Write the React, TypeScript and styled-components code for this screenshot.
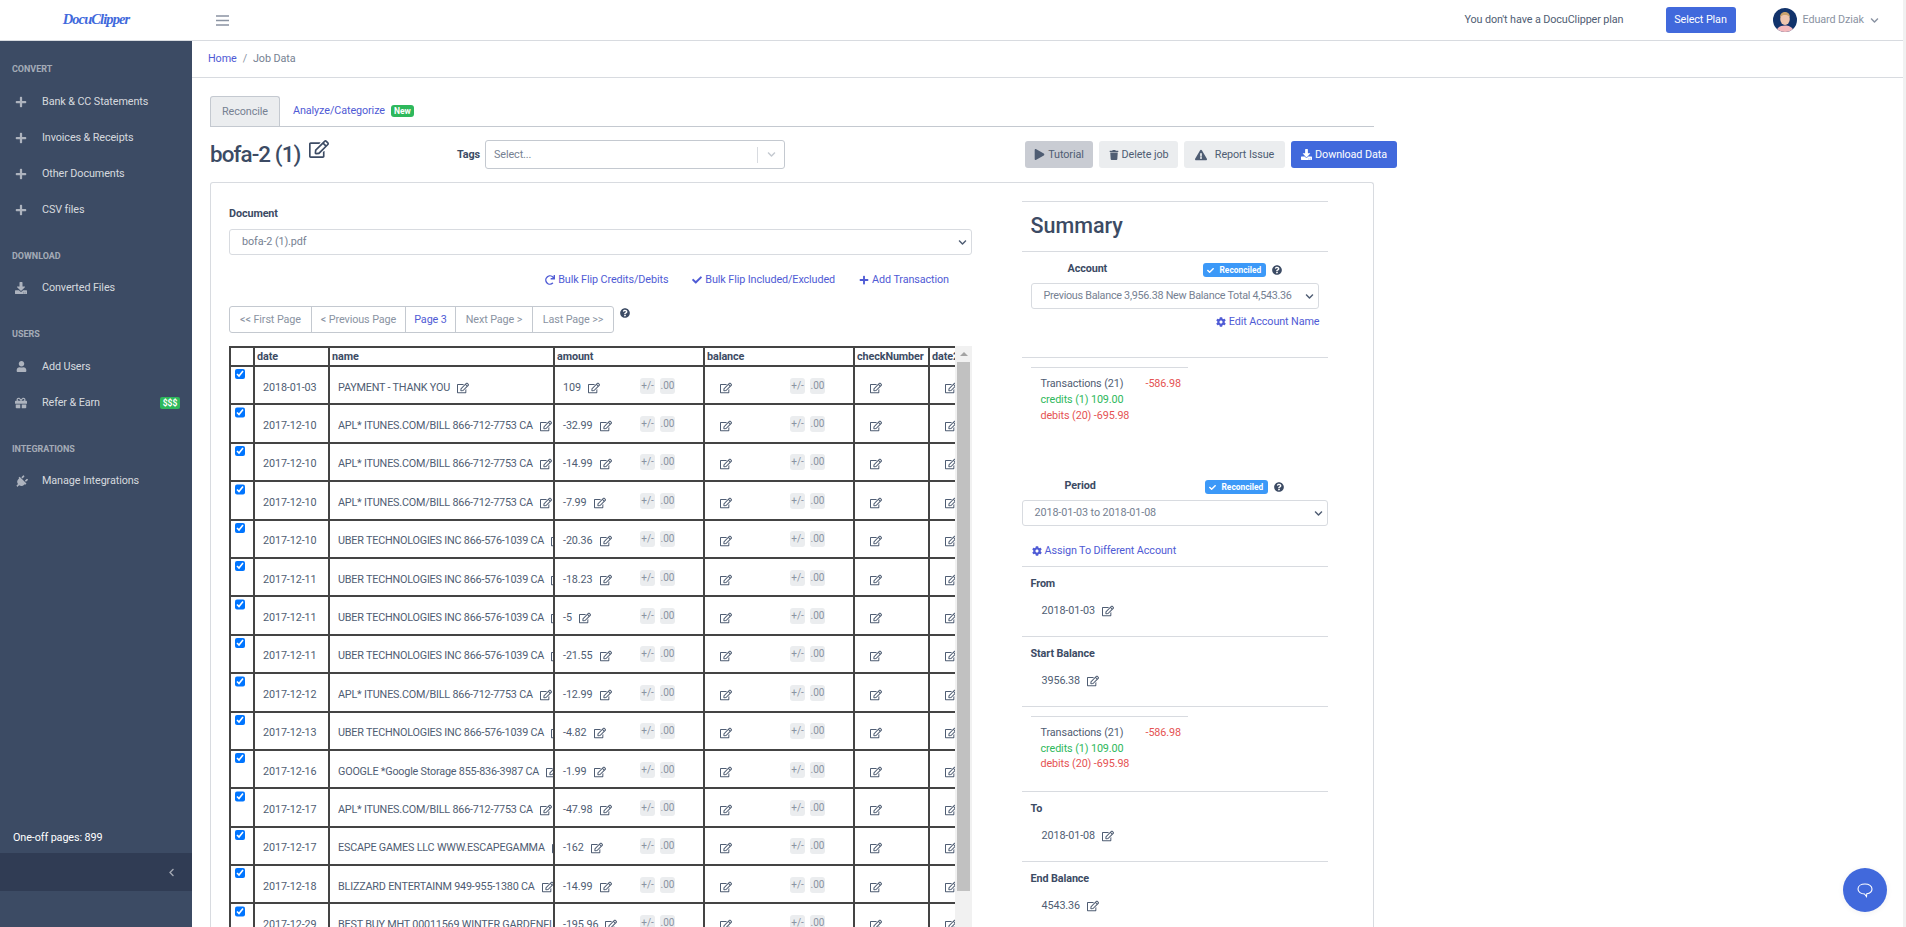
import React from "react";
import styled, { createGlobalStyle } from "styled-components";
import {
  FaPlus,
  FaDownload,
  FaUser,
  FaGift,
  FaPlug,
  FaChevronLeft,
  FaChevronDown,
  FaRegEdit,
  FaPlay,
  FaTrash,
  FaExclamationTriangle,
  FaRedo,
  FaCheck,
  FaCog,
  FaQuestionCircle,
} from "react-icons/fa";

const GlobalStyle = createGlobalStyle`
  html, body {
    margin: 0;
    height: 927px;
    overflow: hidden;
    background: #fff;
  }
  body {
    font-family: "Roboto", "Noto Sans", sans-serif;
    font-size: 10.8px;
    line-height: 16px;
    letter-spacing: -0.1px;
    color: #4f5d73;
  }
  * { box-sizing: border-box; }
`;

type Txn = { date: string; name: string; amount: string };

const APL = "APL* ITUNES.COM/BILL 866-712-7753 CA";
const UBER = "UBER TECHNOLOGIES INC 866-576-1039 CA";

const txns: Txn[] = [
  { date: "2018-01-03", name: "PAYMENT - THANK YOU", amount: "109" },
  { date: "2017-12-10", name: APL, amount: "-32.99" },
  { date: "2017-12-10", name: APL, amount: "-14.99" },
  { date: "2017-12-10", name: APL, amount: "-7.99" },
  { date: "2017-12-10", name: UBER, amount: "-20.36" },
  { date: "2017-12-11", name: UBER, amount: "-18.23" },
  { date: "2017-12-11", name: UBER, amount: "-5" },
  { date: "2017-12-11", name: UBER, amount: "-21.55" },
  { date: "2017-12-12", name: APL, amount: "-12.99" },
  { date: "2017-12-13", name: UBER, amount: "-4.82" },
  { date: "2017-12-16", name: "GOOGLE *Google Storage 855-836-3987 CA", amount: "-1.99" },
  { date: "2017-12-17", name: APL, amount: "-47.98" },
  { date: "2017-12-17", name: "ESCAPE GAMES LLC WWW.ESCAPEGAMMA", amount: "-162" },
  { date: "2017-12-18", name: "BLIZZARD ENTERTAINM 949-955-1380 CA", amount: "-14.99" },
  { date: "2017-12-29", name: "BEST BUY MHT 00011569 WINTER GARDENFL", amount: "-195.96" },
];

function Hamburger() {
  return (
    <svg width="13" height="11" viewBox="0 0 13 11">
      <path d="M0 1h13M0 5.500h13M0 10h13" stroke="#8a93a2" strokeWidth="1.300" fill="none" />
    </svg>
  );
}

function Avatar() {
  return (
    <svg width="24" height="24" viewBox="0 0 24 24">
      <defs>
        <clipPath id="avatarClip">
          <circle cx="12" cy="12" r="12" />
        </clipPath>
      </defs>
      <g clipPath="url(#avatarClip)">
        <rect width="24" height="24" fill="#12336b" />
        <path d="M3 24c1-5 5-6.500 9-6.500s8 1.500 9 6.500z" fill="#f3b9bd" />
        <ellipse cx="12" cy="11" rx="4.800" ry="6" fill="#eec5ae" />
        <path d="M7 9.500c0-4 2.500-5.500 5-5.500s5 1.500 5 5.500c-1.500-2-3-2.500-5-2.500s-3.500.5-5 2.500z" fill="#c9a26c" />
      </g>
    </svg>
  );
}

function ChatBubble() {
  return (
    <svg width="16" height="15" viewBox="0 0 16 15" fill="none">
      <path
        d="M8 1C4 1 1 3 1 6s3 5 6.500 5l2 2.500.3-2.700C13 10.300 15 8.500 15 6c0-3-3-5-7-5z"
        stroke="#fff"
        strokeWidth="1.100"
      />
    </svg>
  );
}

export default function App() {
  return (
    <>
      <GlobalStyle />
      <Shell>
        <Column>
          <Header>
            <LogoBox>
              <Logo>DocuClipper</Logo>
            </LogoBox>
            <Burger>
              <Hamburger />
            </Burger>
            <PlanNote>You don't have a DocuClipper plan</PlanNote>
            <SelectPlan>Select Plan</SelectPlan>
            <AvatarBox>
              <Avatar />
            </AvatarBox>
            <UserName>Eduard Dziak</UserName>
            <FaChevronDown size={9} color="#8a93a2" />
          </Header>
          <Body>
            <Sidebar>
              <NavTitle>Convert</NavTitle>
              <NavItem>
                <NavIcon><FaPlus size={12} /></NavIcon>Bank &amp; CC Statements
              </NavItem>
              <NavItem>
                <NavIcon><FaPlus size={12} /></NavIcon>Invoices &amp; Receipts
              </NavItem>
              <NavItem>
                <NavIcon><FaPlus size={12} /></NavIcon>Other Documents
              </NavItem>
              <NavItem>
                <NavIcon><FaPlus size={12} /></NavIcon>CSV files
              </NavItem>
              <NavTitle>Download</NavTitle>
              <NavItem>
                <NavIcon><FaDownload size={12} /></NavIcon>Converted Files
              </NavItem>
              <NavTitle>Users</NavTitle>
              <NavItem>
                <NavIcon><FaUser size={11} /></NavIcon>Add Users
              </NavItem>
              <NavItem>
                <NavIcon><FaGift size={12} /></NavIcon>Refer &amp; Earn
                <MoneyBadge>$$$</MoneyBadge>
              </NavItem>
              <NavTitle>Integrations</NavTitle>
              <NavItem>
                <NavIcon $tilt><FaPlug size={13} /></NavIcon>Manage Integrations
              </NavItem>
              <OneOff>One-off pages: 899</OneOff>
              <Collapse>
                <FaChevronLeft size={9} />
              </Collapse>
            </Sidebar>
            <Main>
              <Breadcrumb>
                <Link>Home</Link>
                <Slash>/</Slash>
                <span>Job Data</span>
              </Breadcrumb>
              <Content>
                <Tabs>
                  <ActiveTab>Reconcile</ActiveTab>
                  <TabLink>
                    <Link>Analyze/Categorize</Link>
                    <NewBadge>New</NewBadge>
                  </TabLink>
                </Tabs>
                <TitleRow>
                  <TitleBlock>
                    <JobTitle>bofa-2 (1)</JobTitle>
                    <FaRegEdit size={20} color="#3c4b64" />
                  </TitleBlock>
                  <TagsLabel>Tags</TagsLabel>
                  <TagsSelect>
                    <span>Select...</span>
                    <TagsChevron>
                      <FaChevronDown size={9} color="#c4c9d0" />
                    </TagsChevron>
                  </TagsSelect>
                  <Actions>
                    <ActionButton $width={68} $active>
                      <FaPlay size={11} />
                      Tutorial
                    </ActionButton>
                    <ActionButton $width={79}>
                      <FaTrash size={10} />
                      Delete job
                    </ActionButton>
                    <ActionButton $width={101} $roomy>
                      <FaExclamationTriangle size={12} />
                      Report Issue
                    </ActionButton>
                    <DownloadButton>
                      <FaDownload size={11} />
                      Download Data
                    </DownloadButton>
                  </Actions>
                </TitleRow>
                <Card>
                  <LeftPane>
                    <Label>Document</Label>
                    <SelectBox>
                      bofa-2 (1).pdf
                      <FaChevronDown size={9} color="#4f5d73" />
                    </SelectBox>
                    <BulkRow>
                      <Link><FaRedo size={10} />Bulk Flip Credits/Debits</Link>
                      <Link><FaCheck size={10} />Bulk Flip Included/Excluded</Link>
                      <Link><FaPlus size={10} />Add Transaction</Link>
                    </BulkRow>
                    <PagerRow>
                      <Pager>
                        <PageCell $width={81}>&lt;&lt; First Page</PageCell>
                        <PageCell $width={94}>&lt; Previous Page</PageCell>
                        <PageCell $width={50} $current>Page 3</PageCell>
                        <PageCell $width={77}>Next Page &gt;</PageCell>
                        <PageCell $width={81}>Last Page &gt;&gt;</PageCell>
                      </Pager>
                      <PagerHelp>
                        <FaQuestionCircle size={10} />
                      </PagerHelp>
                    </PagerRow>
                    <TableWrap>
                      <TableClip>
                        <Table>
                          <colgroup>
                            <col width={24} />
                            <col width={75} />
                            <col width={225} />
                            <col width={150} />
                            <col width={150} />
                            <col width={75} />
                            <col width={75} />
                          </colgroup>
                          <thead>
                            <tr>
                              <Th />
                              <Th>date</Th>
                              <Th>name</Th>
                              <Th>amount</Th>
                              <Th>balance</Th>
                              <Th>checkNumber</Th>
                              <Th>date2</Th>
                            </tr>
                          </thead>
                          <tbody>
                            {txns.map((t, i) => (
                              <Row key={i}>
                                <CheckCell>
                                  <Check type="checkbox" defaultChecked readOnly />
                                </CheckCell>
                                <Td>
                                  <CellBody>{t.date}</CellBody>
                                </Td>
                                <Td>
                                  <CellBody>
                                    <NameText>{t.name}</NameText>
                                    <EditIcon />
                                  </CellBody>
                                </Td>
                                <Td>
                                  <CellBody>
                                    <ValueSlot>
                                      {t.amount}
                                      <EditIcon />
                                    </ValueSlot>
                                    <MiniButton>+/-</MiniButton>
                                    <MiniButton>.00</MiniButton>
                                  </CellBody>
                                </Td>
                                <Td>
                                  <CellBody>
                                    <ValueSlot>
                                      <EditIcon />
                                    </ValueSlot>
                                    <MiniButton>+/-</MiniButton>
                                    <MiniButton>.00</MiniButton>
                                  </CellBody>
                                </Td>
                                <Td>
                                  <CellBody>
                                    <EditIcon />
                                  </CellBody>
                                </Td>
                                <Td>
                                  <CellBody>
                                    <EditIcon />
                                  </CellBody>
                                </Td>
                              </Row>
                            ))}
                          </tbody>
                        </Table>
                      </TableClip>
                      <ScrollBar>
                        <ScrollArrow />
                        <ScrollThumb />
                      </ScrollBar>
                    </TableWrap>
                  </LeftPane>
                  <RightPane>
                    <SummaryHead>
                      <SummaryTitle>Summary</SummaryTitle>
                    </SummaryHead>
                    <AccountBlock>
                      <StatusRow $indent={37}>
                        <StatusLabel $width={135}>Account</StatusLabel>
                        <Reconciled>
                          <FaCheck size={7} />
                          Reconciled
                        </Reconciled>
                        <HelpIcon><FaQuestionCircle size={10} /></HelpIcon>
                      </StatusRow>
                      <SelectBox $top={6} $width={288} $tight>
                        Previous Balance 3,956.38 New Balance Total 4,543.36
                        <FaChevronDown size={9} color="#4f5d73" />
                      </SelectBox>
                      <EditAccount>
                        <Link><FaCog size={10} />Edit Account Name</Link>
                      </EditAccount>
                    </AccountBlock>
                    <TotalsBlock>
                      <ShortRule />
                      <TotalsLine $top={8}>
                        <TotalsName>Transactions (21)</TotalsName>
                        <Debit>-586.98</Debit>
                      </TotalsLine>
                      <TotalsLine><Credit>credits (1) 109.00</Credit></TotalsLine>
                      <TotalsLine><Debit>debits (20) -695.98</Debit></TotalsLine>
                    </TotalsBlock>
                    <PeriodBlock>
                      <StatusRow $indent={43}>
                        <StatusLabel $width={140}>Period</StatusLabel>
                        <Reconciled>
                          <FaCheck size={7} />
                          Reconciled
                        </Reconciled>
                        <HelpIcon><FaQuestionCircle size={10} /></HelpIcon>
                      </StatusRow>
                      <SelectBox $top={6}>
                        2018-01-03 to 2018-01-08
                        <FaChevronDown size={9} color="#4f5d73" />
                      </SelectBox>
                      <AssignLink>
                        <Link><FaCog size={10} />Assign To Different Account</Link>
                      </AssignLink>
                    </PeriodBlock>
                    <FieldBlock>
                      <FieldName>From</FieldName>
                      <FieldValue>2018-01-03<EditIcon /></FieldValue>
                    </FieldBlock>
                    <FieldBlock>
                      <FieldName>Start Balance</FieldName>
                      <FieldValue>3956.38<EditIcon /></FieldValue>
                    </FieldBlock>
                    <TotalsBlock $compact>
                      <ShortRule />
                      <TotalsLine $top={8}>
                        <TotalsName>Transactions (21)</TotalsName>
                        <Debit>-586.98</Debit>
                      </TotalsLine>
                      <TotalsLine><Credit>credits (1) 109.00</Credit></TotalsLine>
                      <TotalsLine><Debit>debits (20) -695.98</Debit></TotalsLine>
                    </TotalsBlock>
                    <FieldBlock>
                      <FieldName>To</FieldName>
                      <FieldValue>2018-01-08<EditIcon /></FieldValue>
                    </FieldBlock>
                    <FieldBlock>
                      <FieldName>End Balance</FieldName>
                      <FieldValue>4543.36<EditIcon /></FieldValue>
                    </FieldBlock>
                  </RightPane>
                </Card>
              </Content>
            </Main>
          </Body>
        </Column>
        <PageScroll />
      </Shell>
      <ChatButton>
        <ChatBubble />
      </ChatButton>
    </>
  );
}

const EditIcon = styled(FaRegEdit).attrs({ size: 12 })`
  flex-shrink: 0;
  margin-left: 7px;
  color: #4f5d73;
`;

const Shell = styled.div`
  display: flex;
  height: 927px;
  overflow: hidden;
`;
const Column = styled.div`
  flex: 1;
  min-width: 0;
  display: flex;
  flex-direction: column;
`;
const PageScroll = styled.div`
  width: 3px;
  background: #f1f1f1;
`;
const Header = styled.header`
  height: 41px;
  flex-shrink: 0;
  display: flex;
  align-items: center;
  padding-right: 24px;
  border-bottom: 1px solid #d8dbe0;
`;
const LogoBox = styled.div`
  width: 192px;
  text-align: center;
`;
const Logo = styled.span`
  font-family: "Liberation Serif", serif;
  font-style: italic;
  font-weight: 700;
  font-size: 14.500px;
  letter-spacing: -0.9px;
  color: #4169dc;
`;
const Burger = styled.div`
  margin-left: 24px;
  display: flex;
`;
const PlanNote = styled.span`
  margin-left: auto;
  margin-right: 42px;
  color: #4f5d73;
`;
const SelectPlan = styled.button`
  width: 70px;
  height: 26px;
  margin-right: 37px;
  border: none;
  border-radius: 3px;
  background: #4169dc;
  color: #fff;
  font: inherit;
  letter-spacing: inherit;
`;
const AvatarBox = styled.div`
  width: 24px;
  height: 24px;
  display: flex;
`;
const UserName = styled.span`
  margin: 0 6px;
  color: #8a93a2;
`;
const Body = styled.div`
  flex: 1;
  min-height: 0;
  display: flex;
`;
const Sidebar = styled.nav`
  width: 192px;
  flex-shrink: 0;
  display: flex;
  flex-direction: column;
  padding-bottom: 36px;
  background: #3c4b64;
  color: rgba(255, 255, 255, 0.8);
`;
const NavTitle = styled.div`
  height: 14px;
  margin: 21px 0 7.5px;
  padding-left: 12px;
  font-size: 8.960px;
  line-height: 14px;
  font-weight: 700;
  letter-spacing: 0;
  text-transform: uppercase;
  color: rgba(255, 255, 255, 0.55);
`;
const NavItem = styled.div`
  height: 36px;
  display: flex;
  align-items: center;
  padding: 0 12px 0 14px;
`;
const NavIcon = styled.span<{ $tilt?: boolean }>`
  width: 14px;
  margin-right: 14px;
  display: flex;
  justify-content: center;
  color: rgba(255, 255, 255, 0.58);
  transform: ${(p) => (p.$tilt ? "rotate(45deg)" : "none")};
`;
const MoneyBadge = styled.span`
  margin-left: auto;
  width: 20px;
  height: 12px;
  border-radius: 2px;
  background: #2eb85c;
  color: #fff;
  font-size: 8.500px;
  line-height: 12px;
  font-weight: 700;
  letter-spacing: 0;
  text-align: center;
`;
const OneOff = styled.div`
  margin-top: auto;
  margin-bottom: 7px;
  padding-left: 13px;
  color: #fff;
`;
const Collapse = styled.div`
  height: 38px;
  display: flex;
  align-items: center;
  justify-content: flex-end;
  padding-right: 16px;
  background: #303c54;
  color: rgba(255, 255, 255, 0.55);
`;
const Main = styled.main`
  flex: 1;
  min-width: 0;
`;
const Breadcrumb = styled.div`
  height: 37px;
  display: flex;
  align-items: center;
  padding-left: 16px;
  border-bottom: 1px solid #d8dbe0;
  color: #768192;
`;
const Link = styled.span`
  display: inline-flex;
  align-items: center;
  gap: 3px;
  color: #4f5bd5;
`;
const Slash = styled.span`
  margin: 0 6px;
  color: #8a93a2;
`;
const Content = styled.div`
  padding: 18px 0 0 18px;
`;
const Tabs = styled.div`
  width: 1164px;
  height: 31px;
  display: flex;
  border-bottom: 1px solid #c4c9d0;
`;
const ActiveTab = styled.div`
  width: 70px;
  height: 30px;
  display: flex;
  align-items: center;
  justify-content: center;
  border: 1px solid #c4c9d0;
  border-bottom: none;
  border-radius: 3px 3px 0 0;
  background: #ebedef;
  color: #768192;
`;
const TabLink = styled.div`
  display: flex;
  align-items: center;
  margin-left: 13px;
`;
const NewBadge = styled.span`
  margin-left: 6px;
  width: 23px;
  height: 12px;
  border-radius: 3px;
  background: #2eb85c;
  color: #fff;
  font-size: 8.500px;
  line-height: 12px;
  font-weight: 700;
  letter-spacing: 0;
  text-align: center;
`;
const TitleRow = styled.div`
  width: 1187px;
  height: 29px;
  margin-top: 13px;
  display: flex;
  align-items: center;
`;
const TitleBlock = styled.div`
  width: 247px;
  display: flex;
  align-items: flex-start;
  gap: 9px;
  color: #3c4b64;
`;
const JobTitle = styled.h3`
  margin: 0;
  font-size: 22.400px;
  line-height: 31px;
  font-weight: 500;
  letter-spacing: -0.9px;
  color: #3c4b64;
`;
const TagsLabel = styled.span`
  width: 28px;
  font-weight: 700;
  color: #3c4b64;
`;
const TagsSelect = styled.div`
  width: 300px;
  height: 29px;
  display: flex;
  align-items: center;
  justify-content: space-between;
  padding-left: 8px;
  border: 1px solid #c4c9d0;
  border-radius: 3px;
  color: #768192;
`;
const TagsChevron = styled.span`
  height: 16px;
  width: 27px;
  display: flex;
  align-items: center;
  justify-content: center;
  border-left: 1px solid #d8dbe0;
`;
const Actions = styled.div`
  margin-left: auto;
  display: flex;
  gap: 6px;
`;
const ActionButton = styled.button<{ $width: number; $active?: boolean; $roomy?: boolean }>`
  width: ${(p) => p.$width}px;
  height: 27px;
  display: flex;
  align-items: center;
  justify-content: center;
  gap: ${(p) => (p.$roomy ? 8 : 3)}px;
  padding: 0;
  border: none;
  border-radius: 3px;
  font: inherit;
  letter-spacing: inherit;
  color: #4f5d73;
  background: ${(p) => (p.$active ? "#c9ccd3" : "#ebedef")};
`;
const DownloadButton = styled.button`
  width: 106px;
  height: 27px;
  display: flex;
  align-items: center;
  justify-content: center;
  gap: 3px;
  padding: 0;
  border: none;
  border-radius: 3px;
  font: inherit;
  letter-spacing: inherit;
  color: #fff;
  background: #4169dc;
`;
const Card = styled.section`
  width: 1164px;
  margin-top: 13px;
  display: flex;
  padding: 0 46px 0 18px;
  border: 1px solid #d8dbe0;
  border-bottom: none;
  border-radius: 3px 3px 0 0;
`;
const LeftPane = styled.div`
  width: 743px;
  flex-shrink: 0;
  padding-top: 23px;
`;
const Label = styled.div`
  font-weight: 700;
  color: #3c4b64;
  margin-bottom: 7px;
`;
const SelectBox = styled.div<{ $top?: number; $width?: number; $tight?: boolean }>`
  width: ${(p) => (p.$width ? `${p.$width}px` : "100%")};
  height: 26px;
  margin-top: ${(p) => p.$top ?? 0}px;
  display: flex;
  align-items: center;
  justify-content: space-between;
  padding: 0 4px 0 12px;
  border: 1px solid #d8dbe0;
  border-radius: 3px;
  color: #768192;
  white-space: nowrap;
  letter-spacing: ${(p) => (p.$tight ? "-0.28px" : "-0.1px")};
`;
const BulkRow = styled.div`
  margin-top: 17px;
  padding-right: 23px;
  display: flex;
  justify-content: flex-end;
  gap: 24px;
`;
const PagerRow = styled.div`
  margin-top: 18px;
  display: flex;
  align-items: flex-start;
`;
const Pager = styled.div`
  height: 27px;
  display: flex;
  border: 1px solid #c4c9d0;
  border-radius: 3px;
`;
const PageCell = styled.span<{ $width: number; $current?: boolean }>`
  width: ${(p) => p.$width}px;
  display: flex;
  align-items: center;
  justify-content: center;
  color: ${(p) => (p.$current ? "#4f5bd5" : "#8a93a2")};
  & + & {
    border-left: 1px solid #c4c9d0;
  }
`;
const PagerHelp = styled.span`
  margin: 2px 0 0 6px;
  display: flex;
  color: #3c4b64;
`;
const TableWrap = styled.div`
  margin-top: 13px;
  display: flex;
  height: 600px;
`;
const TableClip = styled.div`
  width: 726px;
  overflow: hidden;
`;
const Table = styled.table`
  width: 774px;
  table-layout: fixed;
  border-collapse: collapse;
`;
const Th = styled.th`
  height: 19px;
  padding: 0 0 0 2px;
  border: 2px solid #444;
  font-weight: 700;
  font-size: 10.800px;
  line-height: 14px;
  color: #3c4b64;
  text-align: left;
  overflow: hidden;
  white-space: nowrap;
`;
const Row = styled.tr`
  height: 38.4px;
`;
const Td = styled.td`
  padding: 0;
  border: 2px solid #444;
  overflow: hidden;
`;
const CheckCell = styled.td`
  padding: 2px 0 0 4px;
  border: 2px solid #444;
  vertical-align: top;
  line-height: 0;
`;
const Check = styled.input`
  width: 10.4px;
  height: 10.4px;
  margin: 0;
  accent-color: #0075ff;
`;
const CellBody = styled.div`
  display: flex;
  align-items: center;
  height: 36px;
  padding: 5px 4px 0 8px;
  white-space: nowrap;
  overflow: hidden;
`;
const NameText = styled.span`
  letter-spacing: -0.2px;
`;
const ValueSlot = styled.div`
  width: 77px;
  flex-shrink: 0;
  display: flex;
  align-items: center;
`;
const MiniButton = styled.span`
  width: 15px;
  height: 16px;
  margin-right: 5px;
  margin-top: -4px;
  flex-shrink: 0;
  border-radius: 3px;
  background: #ebedef;
  color: #8a93a2;
  font-size: 10px;
  letter-spacing: 0;
  text-align: center;
`;
const ScrollBar = styled.div`
  width: 17px;
  display: flex;
  flex-direction: column;
  align-items: center;
  height: 600px;
  background: #f1f1f1;
`;
const ScrollArrow = styled.div`
  margin-top: 6px;
  width: 0;
  height: 0;
  border-left: 4px solid transparent;
  border-right: 4px solid transparent;
  border-bottom: 4px solid #a3a3a3;
`;
const ScrollThumb = styled.div`
  width: 13px;
  height: 529px;
  margin-top: 6px;
  background: #c1c1c1;
`;
const RightPane = styled.div`
  width: 306px;
  flex-shrink: 0;
  margin: 18px 0 0 49.500px;
`;
const SummaryHead = styled.div`
  height: 50px;
  padding: 0 0 2px 9px;
  display: flex;
  align-items: center;
  border-top: 1px solid #d8dbe0;
`;
const SummaryTitle = styled.h4`
  margin: 0;
  font-size: 21.500px;
  font-weight: 500;
  letter-spacing: 0;
  color: #3c4b64;
`;
const AccountBlock = styled.div`
  height: 106px;
  padding: 11px 0 0 9px;
  border-top: 1px solid #d8dbe0;
`;
const StatusRow = styled.div<{ $indent: number }>`
  height: 14px;
  display: flex;
  align-items: center;
  padding-left: ${(p) => p.$indent}px;
`;
const StatusLabel = styled.span<{ $width: number }>`
  width: ${(p) => p.$width}px;
  flex-shrink: 0;
  font-weight: 700;
  color: #3c4b64;
  margin-top: -3px;
`;
const Reconciled = styled.span`
  width: 63px;
  height: 14px;
  display: flex;
  align-items: center;
  gap: 6px;
  padding-left: 4px;
  border-radius: 3px;
  background: #3c99f8;
  color: #fff;
  font-size: 8.400px;
  font-weight: 700;
  letter-spacing: 0;
`;
const HelpIcon = styled.span`
  margin-left: 6px;
  display: flex;
  color: #3c4b64;
`;
const EditAccount = styled.div`
  width: 289px;
  margin-top: 5px;
  display: flex;
  justify-content: flex-end;
`;
const TotalsBlock = styled.div<{ $compact?: boolean }>`
  border-top: 1px solid #d8dbe0;
  padding: 9px 0 0 9px;
  height: ${(p) => (p.$compact ? "85px" : "auto")};
  line-height: ${(p) => (p.$compact ? "15.5px" : "16px")};
`;
const ShortRule = styled.div`
  width: 157px;
  height: 1px;
  background: #d8dbe0;
`;
const TotalsLine = styled.div<{ $top?: number }>`
  display: flex;
  margin-top: ${(p) => p.$top ?? 0}px;
  padding-left: 10px;
`;
const TotalsName = styled.span`
  width: 105px;
`;
const Credit = styled.span`
  color: #2eb85c;
`;
const Debit = styled.span`
  color: #e55353;
`;
const PeriodBlock = styled.div`
  margin-top: 56px;
`;
const AssignLink = styled.div`
  margin: 17px 0 5px 10px;
`;
const FieldBlock = styled.div`
  height: 70px;
  padding: 9px 0 0 9px;
  border-top: 1px solid #d8dbe0;
`;
const FieldName = styled.div`
  font-weight: 700;
  color: #3c4b64;
`;
const FieldValue = styled.div`
  margin-top: 11px;
  padding-left: 11px;
  display: flex;
  align-items: center;
`;
const ChatButton = styled.div`
  position: fixed;
  left: 1843px;
  top: 868px;
  width: 44px;
  height: 44px;
  display: flex;
  align-items: center;
  justify-content: center;
  border-radius: 50%;
  background: #4169dc;
  box-shadow: 0 1px 6px rgba(0, 0, 0, 0.06);
`;
